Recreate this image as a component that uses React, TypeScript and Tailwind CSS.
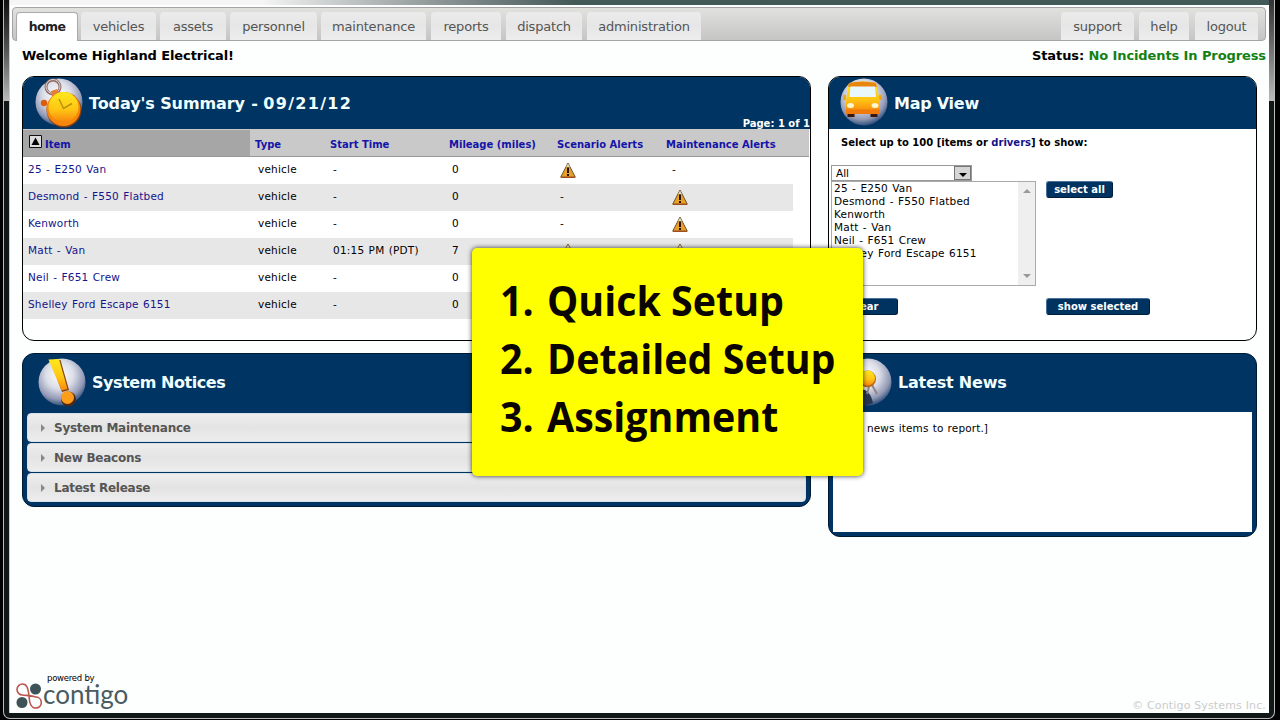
import type { ReactNode } from 'react';

import clsx from 'clsx';

type Vehicle = {
  name: string;
  start: string;
  mileage: string;
  scenario?: 'none' | 'alert';
  maintenance?: 'none' | 'alert';
};

const vehicles: Vehicle[] = [
  { name: '25 - E250 Van', start: '-', mileage: '0', scenario: 'alert', maintenance: 'none' },
  { name: 'Desmond - F550 Flatbed', start: '-', mileage: '0', scenario: 'none', maintenance: 'alert' },
  { name: 'Kenworth', start: '-', mileage: '0', scenario: 'none', maintenance: 'alert' },
  { name: 'Matt - Van', start: '01:15 PM (PDT)', mileage: '7', scenario: 'alert', maintenance: 'alert' },
  { name: 'Neil - F651 Crew', start: '-', mileage: '0' },
  { name: 'Shelley Ford Escape 6151', start: '-', mileage: '0' },
];

const mainTabs = [
  { label: 'vehicles', className: 'w-[75px] mr-1' },
  { label: 'assets', className: 'w-[66px] mr-1' },
  { label: 'personnel', className: 'w-[87px] mr-1' },
  { label: 'maintenance', className: 'w-[105px] mr-[5px]' },
  { label: 'reports', className: 'w-[70px] mr-[5px]' },
  { label: 'dispatch', className: 'w-[76px] mr-[5px]' },
  { label: 'administration', className: 'w-[114px]' },
];

const sideTabs = [
  { label: 'support', className: 'w-[73px] mr-[5px]' },
  { label: 'help', className: 'w-[50px] mr-[6px]' },
  { label: 'logout', className: 'w-[63px]' },
];

const notices = ['System Maintenance', 'New Beacons', 'Latest Release'];

const Tab = ({ label, className }: { label: string; className: string }) => (
  <a
    className={clsx(
      'flex h-[28px] items-center justify-center rounded-t bg-linear-to-b from-[#ebebeb] via-[#e6e6e6] to-[#ededed] pt-px text-[13px] tracking-[-0.2px] text-[#555]',
      className
    )}
  >
    {label}
  </a>
);

const Orb = ({ id, children }: { id: string; children: ReactNode }) => (
  <svg width="48" height="50" viewBox="0 0 48 50" className="shrink-0">
    <defs>
      <radialGradient id={`${id}-orb`} cx="0.45" cy="0.35" r="0.65">
        <stop offset="0" stopColor="#fff" />
        <stop offset="0.45" stopColor="#dcdee8" />
        <stop offset="0.8" stopColor="#9299b5" />
        <stop offset="1" stopColor="#33517d" />
      </radialGradient>
      <linearGradient id={`${id}-gold`} x1="0" y1="0" x2="0" y2="1">
        <stop offset="0" stopColor="#ffe91c" />
        <stop offset="0.6" stopColor="#ffc414" />
        <stop offset="1" stopColor="#f8860c" />
      </linearGradient>
    </defs>
    <circle cx="24" cy="24" r="23.5" fill={`url(#${id}-orb)`} />
    {children}
  </svg>
);

const StopwatchIcon = () => (
  <Orb id="watch">
    <circle cx="18" cy="9" r="7" fill="none" stroke="#8d6b66" strokeWidth="3" />
    <circle cx="18" cy="8.500" r="7" fill="none" stroke="#e6d6d0" strokeWidth="1" />
    <path d="M16 13l6-2 3 6-8 2z" fill="#e2803c" />
    <circle cx="9" cy="25" r="3.200" fill="#dd5c0b" />
    <circle cx="29" cy="32" r="17.500" fill="#853d12" />
    <circle cx="28.500" cy="31" r="17" fill="#f7860c" />
    <circle cx="28.500" cy="29" r="15" fill="url(#watch-gold)" />
    <path d="M24 21l4.500 9.500 8.500-5" fill="none" stroke="#b9920d" strokeWidth="1.500" />
  </Orb>
);

const VanIcon = () => (
  <Orb id="van">
    <path d="M7.500 34h7v5h-7zM30.500 34h7v5h-7z" fill="#3a160c" />
    <path d="M4.500 17v5M40.500 17v5" stroke="#f0a20e" strokeWidth="2.500" />
    <path d="M9 5q13.500-3 27 0l3 14q1 6 .5 15H6q-.5-9 .5-15z" fill="url(#van-gold)" />
    <path d="M9 5q13.500-3 27 0l.8 4H8.200z" fill="#e8850f" />
    <path d="M10.500 8.500h24.500l1 10.500H9.500z" fill="#e9f8ff" />
    <path d="M6 31.500h33.500V36H6z" fill="#f07a0c" />
    <ellipse cx="10.500" cy="27.500" rx="3.500" ry="2.500" fill="#fff8cd" />
    <ellipse cx="35" cy="27.500" rx="3.500" ry="2.500" fill="#fff8cd" />
  </Orb>
);

const ExclamationIcon = () => (
  <Orb id="notice">
    <path d="M12 2h10.500l8.500 30-7 2z" fill="#82420f" />
    <path d="M10.500 1.500L21 1l8.500 30-6 1.500z" fill="url(#notice-gold)" />
    <circle cx="30.500" cy="41" r="7.500" fill="#4e2917" />
    <circle cx="29.500" cy="39.500" r="6.500" fill="#fb9c1b" />
  </Orb>
);

const NewsIcon = () => (
  <Orb id="news">
    <path d="M8 42q2-13 13-10 6 3 8 13-10 5-21-3" fill="#263552" />
    <path d="M28 27l5 9M25 29l-2 7" stroke="#8d8585" strokeWidth="2" />
    <circle cx="23.500" cy="21" r="8.500" fill="#b8651a" />
    <circle cx="23.500" cy="20" r="7.500" fill="url(#news-gold)" />
  </Orb>
);

const WarningIcon = () => (
  <svg width="16" height="16" viewBox="0 0 16 16">
    <path d="M8 1l7.300 14.200H.7z" fill="#e9a02b" stroke="#6d5527" strokeWidth="1" strokeLinejoin="round" />
    <path d="M8 1.500l1.800 3.600H6.200z" fill="#d9dbd0" />
    <path d="M1 15.300h14" stroke="#a23f12" strokeWidth="1" />
    <path d="M8 5.500v5.500M8 12v2" stroke="#26120a" strokeWidth="2" />
  </svg>
);

const SortIcon = () => (
  <svg width="13" height="13" viewBox="0 0 13 13" className="mb-[6px] mr-[3px]">
    <path d="M.5.5h12v12H.5z" fill="#ddd" stroke="#111" />
    <path d="M6.500 2.500L10.500 10h-8z" fill="#000" />
  </svg>
);

const Arrow = ({ className, d }: { className?: string; d: string }) => (
  <svg width="8" height="8" viewBox="0 0 8 8" className={className}>
    <path d={d} fill="currentColor" />
  </svg>
);

const AlertCell = ({ state }: { state?: 'none' | 'alert' }) => {
  if (state === 'alert') return <WarningIcon />;
  return <>{state === 'none' && '-'}</>;
};

const PanelTitle = ({ className, children }: { className?: string; children: ReactNode }) => (
  <h2 className={clsx('text-[16px] font-bold text-[#f2ffff]', className)}>{children}</h2>
);

const MapButton = ({ className, children }: { className: string; children: ReactNode }) => (
  <button
    className={clsx(
      'h-[17px] rounded-[3px] border border-t-[#47719a] border-r-[#001d3a] border-b-[#001d3a] border-l-[#47719a] bg-[#00335f] text-[10px] leading-[14px] font-bold text-white',
      className
    )}
  >
    {children}
  </button>
);

const Summary = () => (
  <section className="flex h-[265px] flex-col overflow-hidden rounded-xl border border-black bg-white">
    <header className="relative flex h-[52px] shrink-0 items-center gap-[6px] bg-[#003462] pl-3">
      <StopwatchIcon />
      <PanelTitle className="pt-px tracking-[-0.1px]">
        Today&apos;s Summary <span className="ml-px">-</span>{' '}
        <span className="tracking-[1.300px]">09/21/12</span>
      </PanelTitle>
      <span className="absolute right-0 bottom-0 text-[10px] leading-[11px] font-bold text-white">
        Page: 1 of 1
      </span>
    </header>
    <div className="mr-px grid h-7 grid-cols-[227px_75px_119px_108px_109px_1fr] items-center border-b border-[#999] bg-[#c9c9c9] pt-px text-[10px] font-bold text-[#1414a8]">
      <div className="flex h-full items-center bg-[#a6a6a6] pt-[2px] pl-[6px]">
        <SortIcon />
        Item
      </div>
      <div className="pt-[2px] pl-[5px]">Type</div>
      <div className="pt-[2px] pl-[5px]">Start Time</div>
      <div className="pt-[2px] pl-[5px]">Mileage (miles)</div>
      <div className="pt-[2px] pl-[5px]">Scenario Alerts</div>
      <div className="pt-[2px] pl-[5px]">Maintenance Alerts</div>
    </div>
    <div className="mr-[17px]">
      {vehicles.map((vehicle) => (
        <div
          key={vehicle.name}
          className="grid h-[27px] grid-cols-[227px_75px_119px_108px_109px_1fr] items-center pb-px text-[10.500px] tracking-[0.2px] [word-spacing:0.8px] odd:bg-white even:bg-[#e7e7e7]"
        >
          <a className="pl-[5px] text-[#14148c]">{vehicle.name}</a>
          <span className="pl-2">vehicle</span>
          <span className="pl-2">{vehicle.start}</span>
          <span className="pl-2">{vehicle.mileage}</span>
          <span className="pl-2">
            <AlertCell state={vehicle.scenario} />
          </span>
          <span className="pl-[11px]">
            <AlertCell state={vehicle.maintenance} />
          </span>
        </div>
      ))}
    </div>
  </section>
);

const SystemNotices = () => (
  <section className="h-[154px] overflow-hidden rounded-xl border border-[#001a33] bg-[#003462]">
    <header className="flex h-[59px] items-center gap-[6px] pb-[2px] pl-[15px]">
      <ExclamationIcon />
      <PanelTitle className="tracking-[-0.45px]">System Notices</PanelTitle>
    </header>
    <div className="flex flex-col gap-px px-1">
      {notices.map((notice) => (
        <div
          key={notice}
          className="flex h-[29px] items-center rounded border border-[#d5e2ea] bg-linear-to-b from-[#ededed] via-[#e4e4e4] to-[#ededed] pl-3 text-[12px] font-bold tracking-[-0.25px] text-[#555]"
        >
          <Arrow className="mr-[6px] text-[#888]" d="M1 0l4 4-4 4z" />
          {notice}
        </div>
      ))}
    </div>
  </section>
);

const MapView = () => (
  <section className="h-[265px] overflow-hidden rounded-xl border border-black bg-white">
    <header className="flex h-[52px] items-center gap-[6px] bg-[#003462] pl-[11px]">
      <VanIcon />
      <PanelTitle className="pt-px tracking-[-0.25px]">Map View</PanelTitle>
    </header>
    <p className="mt-[6px] ml-3 text-[10px] leading-4 font-bold">
      Select up to 100 [items or <a className="text-[#14148c]">drivers</a>] to show:
    </p>
    <div className="mt-[14px] ml-[2px] flex w-[141px] justify-between border border-[#999] pl-1 text-[10.500px] leading-[14px]">
      All
      <span className="flex w-[17px] items-center justify-center border border-[#777] bg-[#d5d5d5] pt-[3px]">
        <Arrow d="M0 2h8L4 6z" />
      </span>
    </div>
    <div className="ml-[2px] flex items-start">
      <div className="flex h-[105px] w-[205px] justify-between border border-[#aaa] pl-[2px]">
        <ul className="text-[10.500px] leading-[13px] tracking-[0.2px] [word-spacing:0.8px]">
          {vehicles.map((vehicle) => (
            <li key={vehicle.name}>{vehicle.name}</li>
          ))}
        </ul>
        <div className="flex w-[17px] flex-col items-center justify-between bg-[#efefef] py-[5px] text-[#999]">
          <Arrow d="M0 6h8L4 2z" />
          <Arrow d="M0 2h8L4 6z" />
        </div>
      </div>
      <MapButton className="ml-[10px] w-[67px]">select all</MapButton>
    </div>
    <div className="mt-3 ml-[2px] flex">
      <MapButton className="w-[67px]">clear</MapButton>
      <MapButton className="ml-[148px] w-[104px]">show selected</MapButton>
    </div>
  </section>
);

const LatestNews = () => (
  <section className="flex h-[184px] flex-col rounded-xl border border-[#001a33] bg-[#003462] px-1 pb-1">
    <header className="flex h-[58px] shrink-0 items-center gap-[6px] pl-[11px]">
      <NewsIcon />
      <PanelTitle className="tracking-[-0.2px]">Latest News</PanelTitle>
    </header>
    <div className="grow bg-white pt-2 pl-[11px] text-[10.500px] leading-4 tracking-[0.12px] [word-spacing:0.7px]">
      [No news items to report.]
    </div>
  </section>
);

const Logo = () => (
  <div className="mb-[3px] w-[120px]">
    <div className="pl-[31px] text-[8.500px] leading-[10px] tracking-[-0.25px]">powered by</div>
    <div className="flex items-start gap-px">
      <svg width="26" height="26" viewBox="0 0 26 26">
        <circle cx="19.500" cy="6" r="5.500" fill="#3e5358" />
        <circle cx="6" cy="19.500" r="5.500" fill="#3e5358" />
        <path
          d="M13 13C12 5 11 1 6.500 1a5.500 5.500 0 0 0 0 11C10 12.500 16 12.500 19.500 14a5.500 5.500 0 1 1-5 7C13 18 13.500 16 13 13z"
          fill="none"
          stroke="#bd5550"
          strokeWidth="1.600"
        />
      </svg>
      <span className="-mt-[2px] h-[28px] font-['Lato'] text-[26px] leading-[26px] text-[#4a5b62]">contigo</span>
    </div>
  </div>
);

const agenda = ['Quick Setup', 'Detailed Setup', 'Assignment'];

const AgendaNote = () => (
  <div className="absolute top-[248px] left-[472px] h-[228px] w-[391px] rounded-[5px] bg-[#ff0] pt-[23px] pl-7 shadow-[0_0_5px_rgba(0,0,0,0.8)]">
    <ol className="w-max origin-left scale-x-[0.96] font-['Open_Sans'] text-[41px] leading-[58px] font-bold whitespace-nowrap text-[#0a0500]">
      {agenda.map((item, index) => (
        <li key={item} className="flex">
          <span className="w-[49px]">{index + 1}.</span>
          {item}
        </li>
      ))}
    </ol>
  </div>
);

const App = () => (
  <div className="relative flex h-[720px] w-[1280px] flex-col overflow-hidden bg-black pr-[5px] pb-px pl-[3px] font-['DejaVu_Sans',sans-serif] text-black">
    <div className="flex grow rounded-b-[7px] border-x border-b border-[#bbb] bg-[#111717] pb-[5px]">
      <div className="h-[101px] w-[5px] bg-linear-to-b from-[#111] via-[#555] to-[#bbb]" />
      <div className="flex grow flex-col border-l border-[#ccc] bg-[#fdfefe]">
        <div className="h-[5px] bg-linear-to-r from-[#f5f5f5] from-20% via-[#879090] via-35% to-[#435957] to-45%" />
        <nav className="mt-[2px] mr-[3px] ml-[2px] flex h-[34px] items-end rounded border border-[#a5a5a5] bg-linear-to-b from-[#e1e1de] to-[#c5c5c5] pr-[7px] pl-[3px]">
          <a className="mr-[3px] -mb-px flex h-[29px] w-[62px] items-center justify-center rounded-t border border-b-0 border-[#aaa] bg-white text-[12.500px] font-bold tracking-[-0.6px] text-[#212121]">
            home
          </a>
          {mainTabs.map((tab) => (
            <Tab key={tab.label} {...tab} />
          ))}
          <div className="grow" />
          {sideTabs.map((tab) => (
            <Tab key={tab.label} {...tab} />
          ))}
        </nav>
        <div className="mr-[3px] ml-3 flex h-[35px] justify-between pt-[6px] text-[13px] leading-[18px] font-bold tracking-[-0.1px]">
          <span>Welcome Highland Electrical!</span>
          <span>
            Status: <span className="text-[#138013]">No Incidents In Progress</span>
          </span>
        </div>
        <main className="ml-3 flex gap-[17px]">
          <div className="flex w-[789px] flex-col gap-3">
            <Summary />
            <SystemNotices />
          </div>
          <div className="flex w-[429px] flex-col gap-3">
            <MapView />
            <LatestNews />
          </div>
        </main>
        <footer className="mt-auto flex items-end justify-between pr-[3px] pb-px pl-[6px]">
          <Logo />
          <span className="text-[11px] leading-[13px] tracking-[0.15px] text-[#ccc]">© Contigo Systems Inc.</span>
        </footer>
      </div>
      <div className="h-[101px] w-[5px] bg-linear-to-b from-[#333] to-[#bbb]" />
    </div>
    <AgendaNote />
  </div>
);

export default App;
